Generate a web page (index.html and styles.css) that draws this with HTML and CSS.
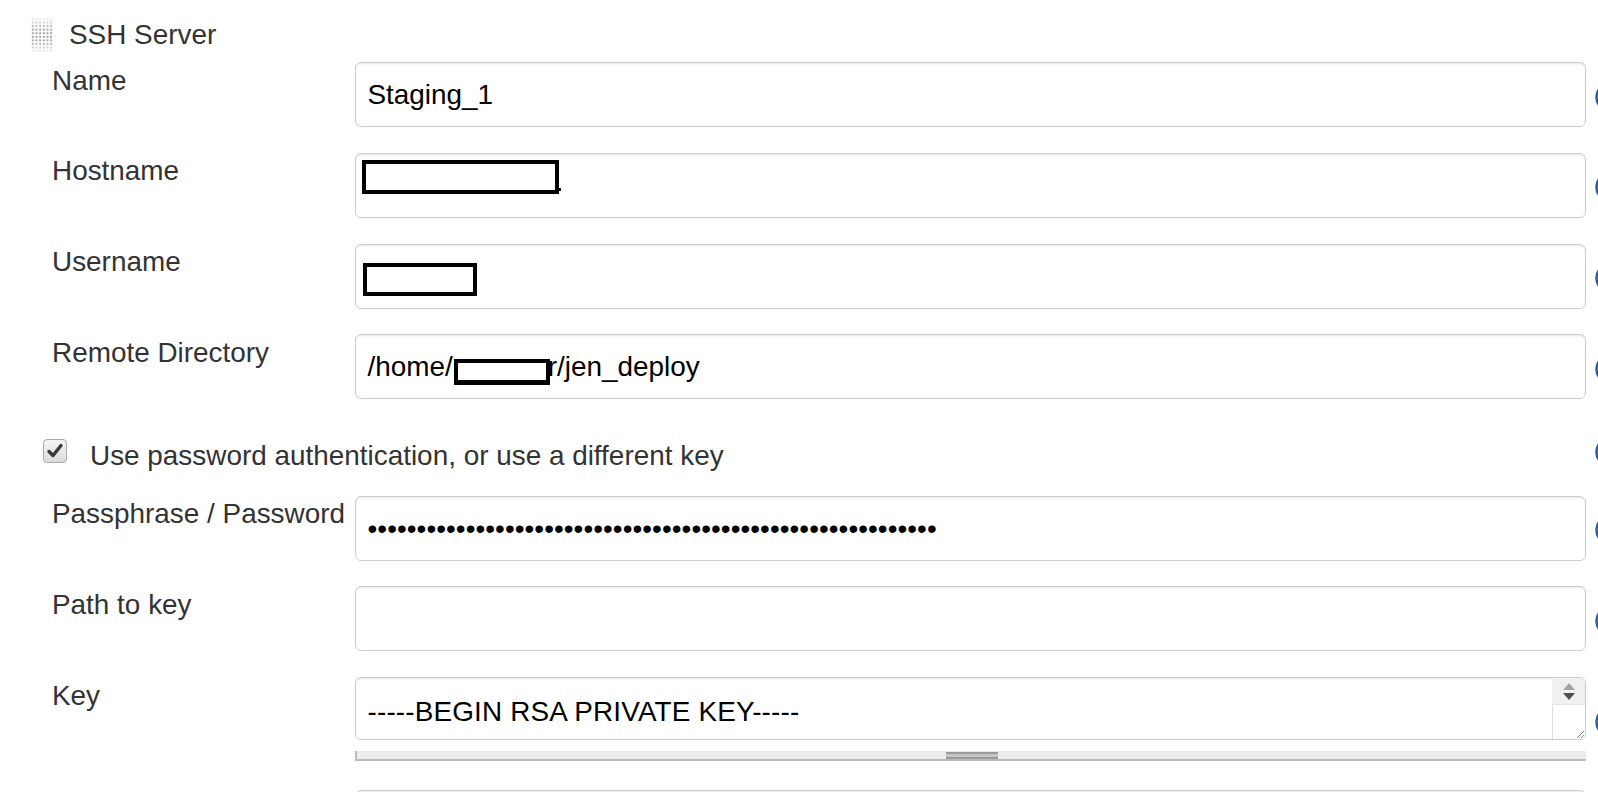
FILE: index.html
```html
<!DOCTYPE html>
<html lang="en">
<head>
<meta charset="utf-8">
<title>SSH Server</title>
<link rel="stylesheet" href="styles.css">
</head>
<body>
<div class="page">
  <div class="header">
    <div class="grip"></div>
    <div class="title">SSH Server</div>
  </div>
  <div class="form">
    <div class="row">
      <div class="label">Name</div>
      <div class="field"><span class="value">Staging_1</span></div>
      <div class="help"><svg width="30" height="30" viewBox="0 0 30 30"><circle cx="15" cy="15" r="13.5" fill="#e4ecf7" stroke="#2d5c9a" stroke-width="2.6"/></svg></div>
    </div>
    <div class="row">
      <div class="label">Hostname</div>
      <div class="field"><span class="value"></span><span class="redact redact-host"></span></div>
      <div class="help"><svg width="30" height="30" viewBox="0 0 30 30"><circle cx="15" cy="15" r="13.5" fill="#e4ecf7" stroke="#2d5c9a" stroke-width="2.6"/></svg></div>
    </div>
    <div class="row">
      <div class="label">Username</div>
      <div class="field"><span class="value"></span><span class="redact redact-user"></span></div>
      <div class="help"><svg width="30" height="30" viewBox="0 0 30 30"><circle cx="15" cy="15" r="13.5" fill="#e4ecf7" stroke="#2d5c9a" stroke-width="2.6"/></svg></div>
    </div>
    <div class="row">
      <div class="label">Remote Directory</div>
      <div class="field"><span class="value">/home/<span class="hidden-part"></span>r/jen_deploy</span><span class="redact redact-dir"></span></div>
      <div class="help"><svg width="30" height="30" viewBox="0 0 30 30"><circle cx="15" cy="15" r="13.5" fill="#e4ecf7" stroke="#2d5c9a" stroke-width="2.6"/></svg></div>
    </div>
    <div class="row row-check">
      <span class="checkbox"><svg width="22" height="22" viewBox="0 0 22 22"><path d="M5 11.5 L9 15.5 L17 5.5" fill="none" stroke="#3a3a3a" stroke-width="3.4" stroke-linecap="round" stroke-linejoin="round"/></svg></span>
      <span class="check-label">Use password authentication, or use a different key</span>
      <div class="help help-check"><svg width="30" height="30" viewBox="0 0 30 30"><circle cx="15" cy="15" r="13.5" fill="#e4ecf7" stroke="#2d5c9a" stroke-width="2.6"/></svg></div>
    </div>
    <div class="row">
      <div class="label">Passphrase / Password</div>
      <div class="field"><span class="value dots">••••••••••••••••••••••••••••••••••••••••••••••••••••••••••</span></div>
      <div class="help"><svg width="30" height="30" viewBox="0 0 30 30"><circle cx="15" cy="15" r="13.5" fill="#e4ecf7" stroke="#2d5c9a" stroke-width="2.6"/></svg></div>
    </div>
    <div class="row">
      <div class="label">Path to key</div>
      <div class="field"><span class="value"></span></div>
      <div class="help"><svg width="30" height="30" viewBox="0 0 30 30"><circle cx="15" cy="15" r="13.5" fill="#e4ecf7" stroke="#2d5c9a" stroke-width="2.6"/></svg></div>
    </div>
    <div class="row row-key">
      <div class="label">Key</div>
      <div class="field-col">
        <div class="field textarea">
          <div class="ta-text"><span class="value key-text">-----BEGIN RSA PRIVATE KEY-----</span></div>
          <div class="scrollbar">
            <div class="sb-buttons"><span class="arrow-up"></span><span class="arrow-down"></span></div>
            <div class="sb-track"><svg class="resizer" width="10" height="10" viewBox="0 0 10 10"><path d="M9 2 L2 9 M9 6 L6 9" stroke="#8a8a8a" stroke-width="1"/></svg></div>
          </div>
        </div>
        <div class="ta-bar"><span class="ta-grip"></span></div>
      </div>
      <div class="help help-key"><svg width="30" height="30" viewBox="0 0 30 30"><circle cx="15" cy="15" r="13.5" fill="#e4ecf7" stroke="#2d5c9a" stroke-width="2.6"/></svg></div>
    </div>
    <div class="row">
      <div class="label"></div>
      <div class="field"><span class="value"></span></div>
    </div>
  </div>
</div>
</body>
</html>
```
FILE: styles.css
```css
html, body {
  margin: 0;
  padding: 0;
  overflow: hidden;
  background: #fff;
}
body {
  width: 1598px;
  height: 792px;
  font-family: "Liberation Sans", Arial, sans-serif;
  font-size: 27.9px;
  color: #333;
}
.page {
  padding-top: 17px;
}
.header {
  display: flex;
  align-items: center;
  height: 36px;
  padding-left: 31px;
}
.grip {
  width: 22px;
  height: 36px;
  background-image: radial-gradient(circle, #a4a4a4 0 1px, rgba(164,164,164,0) 1.5px);
  background-size: 3.67px 3.6px;
  -webkit-mask-image: linear-gradient(to bottom, rgba(0,0,0,0.15) 0, #000 35%, #000 65%, rgba(0,0,0,0.15) 100%);
  mask-image: linear-gradient(to bottom, rgba(0,0,0,0.15) 0, #000 35%, #000 65%, rgba(0,0,0,0.15) 100%);
}
.title {
  margin-left: 16px;
  line-height: 32px;
}
.form {
  display: flex;
  flex-direction: column;
  margin-top: 9px;
}
.row {
  display: flex;
  align-items: flex-start;
  width: 1625px;
  box-sizing: border-box;
  padding-left: 52px;
  margin-bottom: 25.8px;
  flex-shrink: 0;
}
.label {
  flex: 0 0 303px;
  line-height: 32px;
  margin-top: 2.5px;
  white-space: nowrap;
}
.field {
  flex: 0 0 1231px;
  width: 1231px;
  box-sizing: border-box;
  height: 65px;
  border: 1.5px solid #ccc;
  border-radius: 6px;
  box-shadow: inset 0 1.5px 1.5px rgba(0,0,0,0.075);
  display: flex;
  align-items: center;
  padding: 0 11.5px;
  color: #000;
  position: relative;
  background: #fff;
}
.value {
  line-height: 32px;
  white-space: nowrap;
  padding-top: 1px;
}
.dots {
  letter-spacing: 0.05px;
}
.key-text {
  letter-spacing: 0.15px;
}
.hidden-part {
  display: inline-block;
  width: 95px;
}
.redact {
  position: absolute;
  box-sizing: border-box;
  border: 4.5px solid #000;
  background: #fff;
}
.redact-host {
  left: 5.5px;
  top: 6.7px;
  width: 197px;
  height: 33.3px;
}
.redact-host::after {
  content: "";
  position: absolute;
  left: 192.5px;
  top: 23.8px;
  width: 2.7px;
  height: 2.4px;
  background: #000;
}
.redact-user {
  left: 6.5px;
  top: 18.2px;
  width: 114px;
  height: 33.4px;
}
.redact-dir {
  left: 97.5px;
  top: 24.1px;
  width: 96.7px;
  height: 25.7px;
  border-bottom-width: 5px;
}
.help {
  flex: 0 0 30px;
  width: 30px;
  height: 30px;
  margin-left: 9px;
  margin-top: 19.7px;
}
.help svg {
  display: block;
}
.row-check {
  padding-left: 43px;
  margin-top: 13.2px;
  margin-bottom: 23.3px;
  align-items: flex-start;
}
.checkbox {
  flex: 0 0 24px;
  width: 24px;
  height: 24px;
  margin-top: 0.6px;
  box-sizing: border-box;
  border: 1px solid #a9a9a9;
  border-radius: 4px;
  background: linear-gradient(#f4f4f4, #dcdcdc);
  display: flex;
  align-items: center;
  justify-content: center;
}
.checkbox svg {
  display: block;
}
.check-label {
  flex: 1;
  margin-left: 23px;
  margin-top: 2px;
  line-height: 32px;
  white-space: nowrap;
}
.help-check {
  margin-top: -1.7px;
}
.row-key {
  margin-bottom: 29.4px;
}
.field-col {
  flex: 0 0 1231px;
  width: 1231px;
  display: flex;
  flex-direction: column;
}
.field-col .textarea {
  flex: 0 0 auto;
  width: 100%;
  height: 62.3px;
  padding: 0 0 0 11.5px;
  align-items: stretch;
  overflow: hidden;
}
.ta-text {
  flex: 1;
  display: flex;
  align-items: center;
  padding-top: 6px;
}
.scrollbar {
  flex: 0 0 33px;
  display: flex;
  flex-direction: column;
}
.sb-buttons {
  height: 26px;
  background: #f0f0f0;
  display: flex;
  flex-direction: column;
  align-items: center;
  justify-content: center;
  gap: 3px;
}
.arrow-up {
  width: 0;
  height: 0;
  border-left: 6.5px solid transparent;
  border-right: 6.5px solid transparent;
  border-bottom: 7px solid #a3a3a3;
}
.arrow-down {
  width: 0;
  height: 0;
  border-left: 6.5px solid transparent;
  border-right: 6.5px solid transparent;
  border-top: 7px solid #505050;
}
.sb-track {
  flex: 1;
  position: relative;
  background: #fff;
  border-left: 1px solid #dcdcdc;
  border-top: 1px solid #e4e4e4;
}
.resizer {
  position: absolute;
  right: 0;
  bottom: 0;
  display: block;
}
.ta-bar {
  flex: 0 0 auto;
  margin-top: 11.3px;
  height: 9.7px;
  box-sizing: border-box;
  background: #ededed;
  border-left: 2px solid #bcbcb6;
  border-bottom: 2px solid #bcbcb6;
  display: flex;
  justify-content: center;
  align-items: flex-end;
}
.ta-grip {
  width: 52px;
  height: 6.3px;
  box-sizing: border-box;
  border-top: 2.2px solid #9a9a9a;
  border-bottom: 2.2px solid #9a9a9a;
  background: #c6c6c6;
}
.help-key {
  margin-top: 29.7px;
}
```
